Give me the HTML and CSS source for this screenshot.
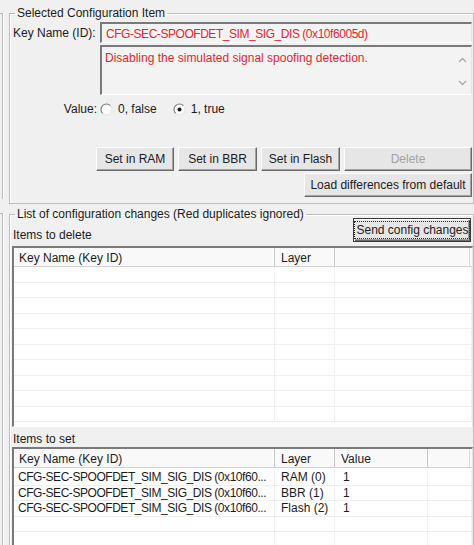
FILE: index.html
```html
<!DOCTYPE html>
<html>
<head>
<meta charset="utf-8">
<link rel="stylesheet" href="styles.css">
</head>
<body>
<div class="window">
  <div class="strip">
    <div class="strip-box a"></div>
    <div class="strip-box b"></div>
  </div>
  <div class="main">
    <fieldset class="group g1">
      <legend>Selected Configuration Item</legend>
      <div class="keyrow">
        <span class="keylabel">Key Name (ID):</span>
        <div class="field red cfg">CFG-SEC-SPOOFDET_SIM_SIG_DIS (0x10f6005d)</div>
      </div>
      <div class="desc">
        <div class="desc-text red">Disabling the simulated signal spoofing detection.</div>
        <div class="vscroll">
          <svg width="9" height="6" viewBox="0 0 9 6"><polyline points="1,5 4.5,1.5 8,5" fill="none" stroke="#a8a8a8" stroke-width="1.3"/></svg>
          <svg width="9" height="6" viewBox="0 0 9 6"><polyline points="1,1 4.5,4.5 8,1" fill="none" stroke="#a8a8a8" stroke-width="1.3"/></svg>
        </div>
      </div>
      <div class="valrow">
        <span class="vallabel">Value:</span>
        <span class="radio">
          <svg width="13" height="13" viewBox="0 0 13 13"><circle cx="6.5" cy="6.5" r="5.5" fill="#fbfbfb" stroke="#e2e2e2"/><path d="M2.6 10.4 A5.5 5.5 0 0 1 10.4 2.6" fill="none" stroke="#7e7e7e" stroke-width="1.1"/></svg>
          <span>0, false</span>
        </span>
        <span class="radio r2">
          <svg width="13" height="13" viewBox="0 0 13 13"><circle cx="6.5" cy="6.5" r="5.5" fill="#fbfbfb" stroke="#e2e2e2"/><path d="M2.6 10.4 A5.5 5.5 0 0 1 10.4 2.6" fill="none" stroke="#7e7e7e" stroke-width="1.1"/><circle cx="6.5" cy="6.5" r="2" fill="#1b1b1b"/></svg>
          <span>1, true</span>
        </span>
      </div>
      <div class="btnrow">
        <button class="btn w78">Set in RAM</button>
        <button class="btn w79">Set in BBR</button>
        <button class="btn w79">Set in Flash</button>
        <button class="btn w128 disabled">Delete</button>
      </div>
      <div class="btnrow2">
        <button class="btn w168">Load differences from default</button>
      </div>
    </fieldset>

    <fieldset class="group g2">
      <legend>List of configuration changes (Red duplicates ignored)</legend>
      <div class="sendrow">
        <span>Items to delete</span>
        <button class="btn default"><span class="focus">Send config changes</span></button>
      </div>
      <div class="list list1">
        <div class="lhead cols3">
          <div class="hc">Key Name (Key ID)</div>
          <div class="hc">Layer</div>
          <div class="hc last"></div>
        </div>
        <div class="lrow cols3"><div></div><div></div><div></div></div>
        <div class="lrow cols3"><div></div><div></div><div></div></div>
        <div class="lrow cols3"><div></div><div></div><div></div></div>
        <div class="lrow cols3"><div></div><div></div><div></div></div>
        <div class="lrow cols3"><div></div><div></div><div></div></div>
        <div class="lrow cols3"><div></div><div></div><div></div></div>
        <div class="lrow cols3"><div></div><div></div><div></div></div>
        <div class="lrow cols3"><div></div><div></div><div></div></div>
        <div class="lrow cols3"><div></div><div></div><div></div></div>
        <div class="lrow cols3"><div></div><div></div><div></div></div>
      </div>
      <div class="setlabel">Items to set</div>
      <div class="list list2">
        <div class="lhead cols4">
          <div class="hc">Key Name (Key ID)</div>
          <div class="hc">Layer</div>
          <div class="hc">Value</div>
          <div class="hc last"></div>
        </div>
        <div class="lrow cols4 first"><div class="c1 cfg">CFG-SEC-SPOOFDET_SIM_SIG_DIS (0x10f60...</div><div class="c2">RAM (0)</div><div class="c3">1</div><div></div></div>
        <div class="lrow cols4"><div class="c1 cfg">CFG-SEC-SPOOFDET_SIM_SIG_DIS (0x10f60...</div><div class="c2">BBR (1)</div><div class="c3">1</div><div></div></div>
        <div class="lrow cols4"><div class="c1 cfg">CFG-SEC-SPOOFDET_SIM_SIG_DIS (0x10f60...</div><div class="c2">Flash (2)</div><div class="c3">1</div><div></div></div>
        <div class="lrow cols4"><div></div><div></div><div></div><div></div></div>
        <div class="lrow cols4"><div></div><div></div><div></div><div></div></div>
      </div>
    </fieldset>
  </div>
</div>
</body>
</html>
```

FILE: styles.css
```css
* { box-sizing: border-box; }
html, body { margin: 0; padding: 0; }
body {
  width: 474px;
  height: 545px;
  overflow: hidden;
  background: #f0f0f0;
  font-family: "Liberation Sans", Arial, sans-serif;
  font-size: 12px;
  line-height: 14px;
  color: #1b1b1b;
}
.window { display: flex; height: 545px; overflow: hidden; }
.strip { flex: 0 0 9px; display: flex; flex-direction: column; }
.strip-box {
  width: 3px;
  border-top: 1px solid #b8b8b8;
  border-right: 1px solid #b8b8b8;
  box-shadow: 1px 0 0 #fff;
}
.strip-box.a { margin-top: 13px; height: 186px; }
.strip-box.b { margin-top: 14px; flex: 1; }
.main { flex: 1; min-width: 0; }

.group {
  margin: 0;
  padding: 0 0 0 3px;
  width: 465px;
  min-width: 0;
  border: 1px solid #bdbdbd;
  box-shadow: inset 1px 1px 0 #fff;
}
.group legend { padding: 0 2px; margin-left: 2px; line-height: 14px; }
.g1 { margin-top: 6px; padding-bottom: 6px; }
.g2 { margin-top: 3px; height: 338px; border-bottom: 0; }

.red { color: #e3262f; }
.cfg { letter-spacing: -0.45px; }

.keyrow { display: flex; align-items: center; margin-top: 2px; margin-right: 1px; }
.keylabel { width: 87px; }
.field {
  flex: 1;
  height: 21px;
  padding: 3px 0 0 4px;
  background: #f3f3f3;
  border-top: 2px solid #7a7a7a;
  border-left: 2px solid #7a7a7a;
  border-right: 1px solid #e4e4e4;
  border-bottom: 1px solid #fff;
  white-space: nowrap;
}
.desc {
  display: flex;
  margin: 2px 1px 0 87px;
  height: 50px;
  background: #f3f3f3;
  border-top: 2px solid #7a7a7a;
  border-left: 2px solid #7a7a7a;
  border-right: 1px solid #e4e4e4;
  border-bottom: 1px solid #fff;
}
.desc-text { flex: 1; padding: 4px 0 0 3px; }
.vscroll {
  flex: 0 0 18px;
  display: flex;
  flex-direction: column;
  justify-content: space-between;
  align-items: center;
  padding: 10px 0 8px;
}
.vscroll svg { display: block; }

.valrow { display: flex; align-items: center; margin-top: 6px; height: 16px; }
.vallabel { width: 84px; text-align: right; margin-right: 3px; }
.radio { display: flex; align-items: center; gap: 5px; }
.radio svg { display: block; }
.r2 { margin-left: 16px; }

.btnrow { display: flex; justify-content: flex-end; gap: 4px; margin-top: 30px; margin-right: 1px; }
.btnrow2 { display: flex; justify-content: flex-end; margin-top: 2px; margin-right: 1px; }
.btn {
  height: 24px;
  padding: 0;
  font: inherit;
  color: #1b1b1b;
  background: #e6e6e6;
  border: 1px solid;
  border-color: #fdfdfd #6a6a6a #6a6a6a #fdfdfd;
  box-shadow: inset -1px -1px 0 #a3a3a3;
}
.w78 { width: 78px; }
.w79 { width: 79px; }
.w128 { width: 128px; }
.w168 { width: 168px; }
.disabled { color: #a3a3a3; }

.sendrow {
  display: flex;
  justify-content: space-between;
  align-items: flex-end;
  margin-top: -3px;
  margin-right: 2px;
}
.btn.default {
  width: 118px;
  border: 1px solid #3a3a3a;
  box-shadow: inset 1px 1px 0 #fdfdfd, inset -1px -1px 0 #6a6a6a, inset -2px -2px 0 #a3a3a3;
  display: flex;
  align-items: center;
  justify-content: center;
}
.focus {
  display: block;
  padding: 2px 1px 2px 2px;
  outline: 1px dotted #2a2a2a;
  outline-offset: -1px;
  line-height: 14px;
}

.list {
  margin-left: -1px;
  background: #fff;
  border-top: 2px solid #7a7a7a;
  border-left: 2px solid #7a7a7a;
  border-right: 1px solid #e4e4e4;
  border-bottom: 1px solid #fff;
  overflow: hidden;
}
.list1 { margin-top: 4px; height: 181px; }
.setlabel { margin-top: 5px; }
.list2 { margin-top: 1px; height: 100px; }

.cols3 { display: grid; grid-template-columns: 261px 60px 1fr; }
.cols4 { display: grid; grid-template-columns: 261px 60px 93px 1fr; }
.lhead {
  height: 19px;
  background: #f9f9f9;
  border-bottom: 1px solid #d2d2d2;
}
.hc {
  padding: 3px 0 0 6px;
  border-right: 1px solid #c6c6c6;
  box-shadow: inset -1px 0 0 #fff;
}
.hc:first-child { padding-left: 5px; }
.hc.last { border-right: 1px solid #dcdcdc; margin-right: 2px; }
.lrow {
  height: 15.5px;
  border-bottom: 1px solid #efefef;
}
.lrow > div { border-right: 1px solid #efefef; white-space: nowrap; overflow: hidden; line-height: 14px; }
.lrow.first { margin-top: 2px; }
.c1 { padding-left: 4px; }
.c2 { padding-left: 6px; }
.c3 { padding-left: 8px; }
```
